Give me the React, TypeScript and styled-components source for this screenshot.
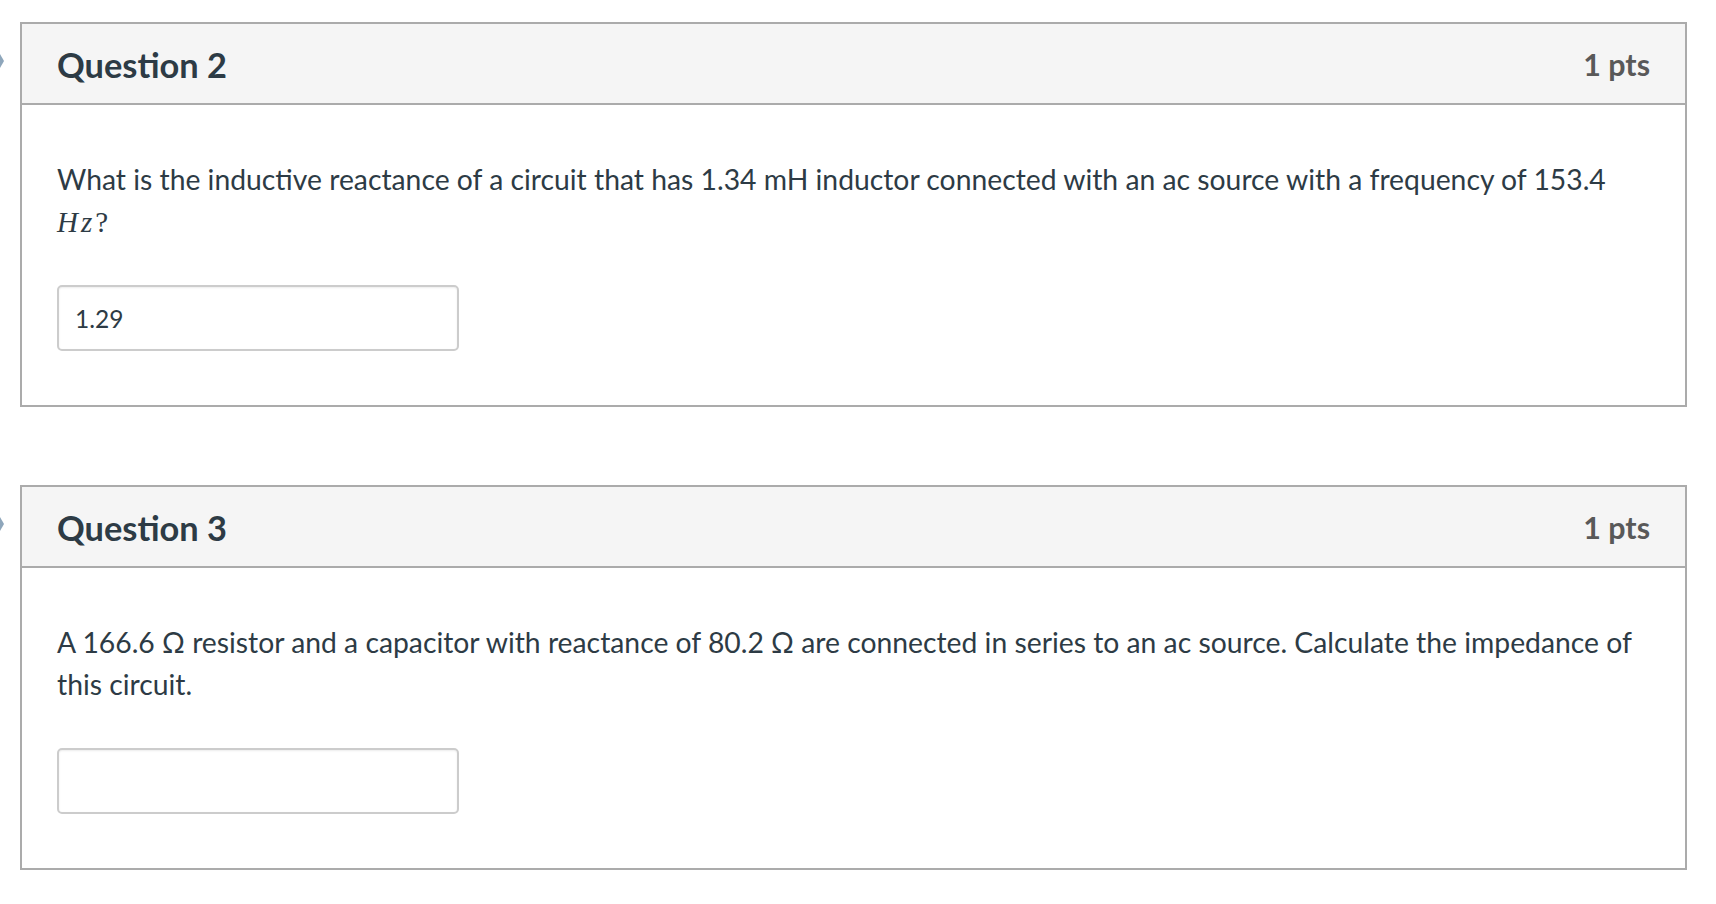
import styled, { createGlobalStyle } from "styled-components";

const GlobalStyle = createGlobalStyle`
  html, body {
    margin: 0;
    padding: 0;
    background: #ffffff;
    font-family: Lato, "Open Sans", "Liberation Sans", sans-serif;
    color: #2d3b45;
  }
`;

const Page = styled.div`
  padding: 22px 29px 0 0;
`;

const Row = styled.div`
  display: flex;
  align-items: flex-start;
  margin-bottom: 78px;
`;

const Marker = styled.div`
  width: 20px;
  flex: none;
  padding-top: 31px;
  overflow: hidden;

  svg {
    display: block;
  }
`;

const Card = styled.div`
  flex: 1;
  border: 2px solid #ababab;
  background: #ffffff;
`;

const Header = styled.div`
  display: flex;
  align-items: center;
  justify-content: space-between;
  height: 79px;
  padding: 0 35px 0 35px;
  background: #f5f5f5;
  border-bottom: 2px solid #ababab;
`;

const Title = styled.div`
  font-size: 34.4px;
  font-weight: 700;
  color: #2d3b45;
  padding-top: 2px;
`;

const Points = styled.div`
  font-size: 30.4px;
  font-weight: 700;
  color: #595959;
`;

const Body = styled.div`
  padding: 53px 35px 54px 35px;
`;

const Text = styled.div`
  font-size: 28.3px;
  line-height: 42px;
  color: #2d3b45;
  margin-bottom: 43px;
`;

const MathVar = styled.span`
  font-family: "Liberation Serif", "DejaVu Serif", serif;
  font-size: 29px;
  line-height: 1;
  letter-spacing: 3px;
`;

const MathMark = styled.span`
  font-family: "Liberation Serif", "DejaVu Serif", serif;
  font-size: 29px;
  line-height: 1;
`;

const Answer = styled.input`
  display: block;
  box-sizing: border-box;
  width: 402px;
  height: 66px;
  padding: 0 16px;
  border: 2px solid #cccccc;
  border-radius: 5px;
  box-shadow: inset 0 1px 2px rgba(0, 0, 0, 0.08);
  background: #ffffff;
  font-family: Lato, "Liberation Sans", sans-serif;
  font-size: 24.5px;
  color: #2d3b45;
  outline: none;
`;

interface Question {
  id: number;
  title: string;
  points: string;
  text: React.ReactNode;
  answer: string;
}

const getQuestions = (): Question[] => [
  {
    id: 2,
    title: "Question 2",
    points: "1 pts",
    text: (
      <>
        What is the inductive reactance of a circuit that has 1.34 mH inductor
        connected with an ac source with a frequency of 153.4 <br />
        <MathVar>
          <i>H</i>
          <i>z</i>
        </MathVar>
        <MathMark>?</MathMark>
      </>
    ),
    answer: "1.29",
  },
  {
    id: 3,
    title: "Question 3",
    points: "1 pts",
    text: (
      <>
        A 166.6 Ω resistor and a capacitor with reactance of 80.2 Ω are
        connected in series to an ac source. Calculate the impedance of this
        circuit.
      </>
    ),
    answer: "",
  },
];

const App = () => {
  const questions = getQuestions();
  return (
    <Page>
      <GlobalStyle />
      {questions.map((q) => (
        <Row key={q.id}>
          <Marker>
            <svg width="20" height="16" viewBox="0 0 20 16">
              <path d="M-12 1 L0 1 L4 8 L0 15 L-12 15 Z" fill="#8ea6bb" />
            </svg>
          </Marker>
          <Card>
            <Header>
              <Title>{q.title}</Title>
              <Points>{q.points}</Points>
            </Header>
            <Body>
              <Text>{q.text}</Text>
              <Answer type="text" defaultValue={q.answer} />
            </Body>
          </Card>
        </Row>
      ))}
    </Page>
  );
};

export default App;
